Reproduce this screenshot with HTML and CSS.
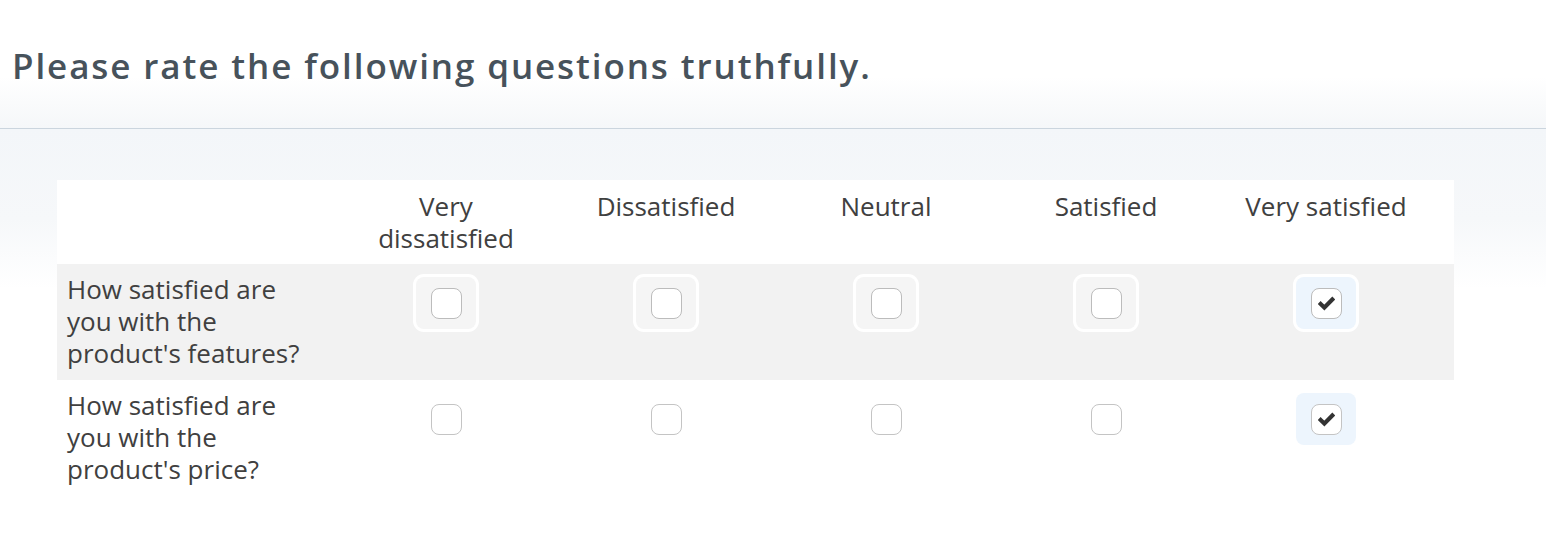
FILE: index.html
```html
<!DOCTYPE html>
<html>
<head>
<meta charset="utf-8">
<link rel="stylesheet" href="styles.css">
</head>
<body>
<header class="top">
  <h1 class="title">Please rate the following questions truthfully.</h1>
</header>
<main class="content">
  <div class="matrix">
    <div class="row head">
      <div class="cell q"></div>
      <div class="cell col">Very<br>dissatisfied</div>
      <div class="cell col">Dissatisfied</div>
      <div class="cell col">Neutral</div>
      <div class="cell col">Satisfied</div>
      <div class="cell col">Very satisfied</div>
    </div>
    <div class="row alt">
      <div class="cell q">How satisfied are<br>you with the<br>product's features?</div>
      <div class="cell opt"><span class="item ring"><span class="box"></span></span></div>
      <div class="cell opt"><span class="item ring"><span class="box"></span></span></div>
      <div class="cell opt"><span class="item ring"><span class="box"></span></span></div>
      <div class="cell opt"><span class="item ring"><span class="box"></span></span></div>
      <div class="cell opt"><span class="item ring checked"><span class="box"><svg class="tick" viewBox="0 0 16 16"><path d="M2.5 8.4 L6 11.8 L13.5 4.2" fill="none" stroke="#333" stroke-width="3.8" stroke-linecap="square"/></svg></span></span></div>
    </div>
    <div class="row">
      <div class="cell q">How satisfied are<br>you with the<br>product's price?</div>
      <div class="cell opt"><span class="item"><span class="box"></span></span></div>
      <div class="cell opt"><span class="item"><span class="box"></span></span></div>
      <div class="cell opt"><span class="item"><span class="box"></span></span></div>
      <div class="cell opt"><span class="item"><span class="box"></span></span></div>
      <div class="cell opt"><span class="item checked"><span class="box"><svg class="tick" viewBox="0 0 16 16"><path d="M2.5 8.4 L6 11.8 L13.5 4.2" fill="none" stroke="#333" stroke-width="3.8" stroke-linecap="square"/></svg></span></span></div>
    </div>
  </div>
</main>
</body>
</html>
```
FILE: styles.css
```css
html, body {
  margin: 0;
  padding: 0;
}
body {
  width: 1546px;
  height: 544px;
  overflow: hidden;
  background: #fff;
  font-family: "Open Sans", "DejaVu Sans", sans-serif;
  color: #404040;
}
.top {
  height: 129px;
  box-sizing: border-box;
  border-bottom: 1px solid #cbd5de;
  background: linear-gradient(#ffffff 0%, #ffffff 60%, #f5f7f9 100%);
  padding-top: 43px;
}
.title {
  margin: 0;
  padding-left: 12px;
  font-size: 35px;
  font-weight: 600;
  letter-spacing: 1.9px;
  color: #47525b;
  line-height: 46px;
}
.content {
  box-sizing: border-box;
  padding: 51px 0 0 57px;
  background: linear-gradient(#f3f6f9 0px, #f6f8fa 90px, #ffffff 160px);
  height: 415px;
}
.matrix {
  width: 1397px;
  background: #fff;
}
.row {
  display: grid;
  grid-template-columns: 279px repeat(5, 220px) 18px;
}
.row.alt {
  background: #f2f2f2;
}
.head {
  height: 84px;
}
.cell {
  font-size: 26px;
  line-height: 32px;
}
.head .col {
  text-align: center;
  padding-top: 10px;
}
.q {
  padding: 9px 10px 11px;
  color: #404040;
}
.opt {
  display: flex;
  justify-content: center;
  align-items: flex-start;
  padding-top: 13px;
}
.item {
  display: flex;
  align-items: center;
  justify-content: center;
  width: 60px;
  height: 52px;
  border-radius: 8px;
  box-sizing: border-box;
}
.item.ring {
  background: #f5f5f5;
  box-shadow: 0 0 0 3px #ffffff;
}
.item.checked {
  background: #edf5fd;
}
.box {
  width: 31px;
  height: 31px;
  box-sizing: border-box;
  border: 1.5px solid #c4c4c4;
  border-radius: 8px;
  background: #fff;
  display: flex;
  align-items: center;
  justify-content: center;
}
.ring .box {
  border-color: #bcbcbc;
}
.tick {
  width: 17px;
  height: 17px;
}
```
